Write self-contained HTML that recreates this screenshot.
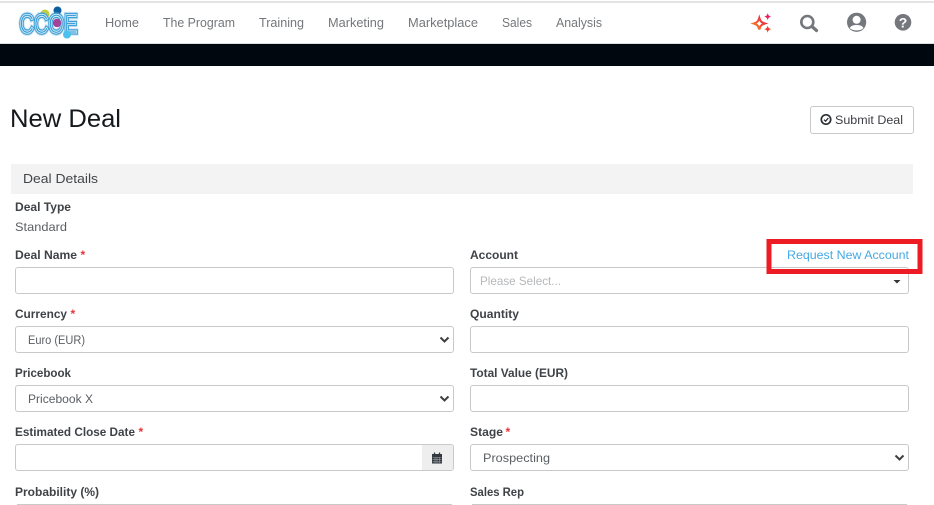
<!DOCTYPE html>
<html lang="en">
<head>
<meta charset="utf-8">
<title>New Deal</title>
<style>
html,body{margin:0;padding:0;width:934px;height:505px;overflow:hidden;background:#fff}
svg{display:block;position:absolute;left:0;top:0}
text{font-family:"Liberation Sans",Arial,sans-serif}
.nav{font-size:12.6px;fill:#74777b}
.lb{font-size:12.3px;font-weight:bold;fill:#3f4247}
.req{font-size:12px;font-weight:bold;fill:#e8333a}
.val{font-size:12.3px;fill:#5a5e63}
.box{fill:#fff;stroke:#c9c9c9;stroke-width:1}
.chev{fill:none;stroke:#3f3f3f;stroke-width:2}
</style>
</head>
<body>
<svg width="934" height="505" viewBox="0 0 934 505" xmlns="http://www.w3.org/2000/svg">
<!-- top bar -->
<rect x="0" y="0" width="934" height="505" fill="#fff"/>
<rect x="0" y="1" width="934" height="2" fill="#e3e3e3"/>
<rect x="0" y="43" width="934" height="1" fill="#dcdfe2"/>
<rect x="0" y="44" width="934" height="22" fill="#00070f"/>

<!-- logo -->
<circle cx="45" cy="14" r="4.500" fill="#c5cf3a"/>
<circle cx="57.500" cy="10.500" r="4" fill="#0d5f9e"/>
<text x="19.500" y="33" font-size="27" fill="none" stroke="#4aa6d8" stroke-opacity=".28" stroke-width="5.500" textLength="58" lengthAdjust="spacingAndGlyphs" aria-hidden="true">CCOE</text>
<text x="19.500" y="33" font-size="27" fill="none" stroke="#3f9fd6" stroke-width="3.300" textLength="58" lengthAdjust="spacingAndGlyphs" aria-hidden="true">CCOE</text>
<text x="19.500" y="33" font-size="27" fill="none" stroke="#e4f3fb" stroke-width=".8" textLength="58" lengthAdjust="spacingAndGlyphs">CCOE</text>
<circle cx="57" cy="23" r="4.200" fill="#a2459a"/>
<circle cx="67" cy="34.500" r="4" fill="#4cc1ee"/>

<!-- nav -->
<text class="nav" x="105" y="27" textLength="34" lengthAdjust="spacingAndGlyphs">Home</text>
<text class="nav" x="163" y="27" textLength="72" lengthAdjust="spacingAndGlyphs">The Program</text>
<text class="nav" x="259" y="27" textLength="45" lengthAdjust="spacingAndGlyphs">Training</text>
<text class="nav" x="328" y="27" textLength="56" lengthAdjust="spacingAndGlyphs">Marketing</text>
<text class="nav" x="408" y="27" textLength="70" lengthAdjust="spacingAndGlyphs">Marketplace</text>
<text class="nav" x="502" y="27" textLength="30" lengthAdjust="spacingAndGlyphs">Sales</text>
<text class="nav" x="556" y="27" textLength="46" lengthAdjust="spacingAndGlyphs">Analysis</text>

<!-- sparkle icon -->
<defs><linearGradient id="sg" x1="0" y1="1" x2="1" y2="0"><stop offset="0" stop-color="#f58a1f"/><stop offset="1" stop-color="#ee1c4a"/></linearGradient></defs>
<path d="M759.300 18 C760.200 21 761 22.300 764.800 23.500 C761 24.700 760.200 26 759.300 29.500 C758.400 26 757.600 24.700 753.800 23.500 C757.600 22.300 758.400 21 759.300 18Z" fill="none" stroke="url(#sg)" stroke-width="2.100"/>
<path d="M767.700 13 C768.300 15.400 768.900 16 771.200 16.600 C768.900 17.200 768.300 17.800 767.700 20.200 C767.100 17.800 766.500 17.200 764.200 16.600 C766.500 16 767.100 15.400 767.700 13Z" fill="#ee1c5a"/>
<path d="M767.700 25.500 C768.300 27.900 768.900 28.500 771.200 29.100 C768.900 29.700 768.300 30.300 767.700 32.700 C767.100 30.300 766.500 29.700 764.200 29.100 C766.500 28.500 767.100 27.900 767.700 25.500Z" fill="#f2382f"/>

<!-- search icon -->
<circle cx="807.300" cy="22" r="6" fill="none" stroke="#74777b" stroke-width="2.600"/>
<path d="M812 26.500 L816.500 30.500" stroke="#74777b" stroke-width="3.200" stroke-linecap="round"/>

<!-- user icon -->
<circle cx="856.600" cy="22.300" r="9.600" fill="#74777b"/>
<circle cx="856.600" cy="19.800" r="4" fill="#fff"/>
<path d="M849.800 28 C851 25.600 853.500 25 856.600 25 C859.700 25 862.200 25.600 863.400 28 C861.800 29.900 859.300 30.400 856.600 30.400 C853.900 30.400 851.400 29.900 849.800 28Z" fill="#fff"/>

<!-- help icon -->
<circle cx="903" cy="22.300" r="8.300" fill="#74777b"/>
<text x="903" y="27.300" font-size="14" font-weight="bold" fill="#fff" text-anchor="middle">?</text>

<!-- heading -->
<text x="10" y="127" font-size="25" fill="#15181c" textLength="111" lengthAdjust="spacingAndGlyphs">New Deal</text>

<!-- submit button -->
<rect class="box" x="810.500" y="106.500" width="103" height="27" rx="2.500"/>
<circle cx="826" cy="119.500" r="4.700" fill="none" stroke="#2a2d31" stroke-width="1.700"/>
<path d="M824 119.700 L825.600 121.200 L828.300 118" fill="none" stroke="#2a2d31" stroke-width="1.300"/>
<text x="835" y="124" font-size="12.300" fill="#3a3d42" textLength="68" lengthAdjust="spacingAndGlyphs">Submit Deal</text>

<!-- section -->
<rect x="11" y="164" width="902" height="30" fill="#f3f3f3"/>
<text x="23" y="183" font-size="13.300" fill="#42454a" textLength="75" lengthAdjust="spacingAndGlyphs">Deal Details</text>

<!-- deal type -->
<text class="lb" x="15" y="211" textLength="56" lengthAdjust="spacingAndGlyphs">Deal Type</text>
<text class="val" x="15" y="231" textLength="52" lengthAdjust="spacingAndGlyphs">Standard</text>

<!-- row 1 -->
<text class="lb" x="15" y="259" textLength="62" lengthAdjust="spacingAndGlyphs">Deal Name</text>
<text class="req" x="80.500" y="259">*</text>
<rect class="box" x="15.500" y="267.500" width="438" height="26" rx="2.500"/>
<text class="lb" x="470" y="259" textLength="48" lengthAdjust="spacingAndGlyphs">Account</text>
<rect class="box" x="470.500" y="267.500" width="438" height="26" rx="2.500"/>
<text x="480" y="285" font-size="11.800" fill="#b5b7ba" textLength="81" lengthAdjust="spacingAndGlyphs">Please Select...</text>
<path d="M893.500 280 L900.500 280 L897 283.500Z" fill="#333"/>
<text x="787" y="259" font-size="12.300" fill="#45a9e2" textLength="122" lengthAdjust="spacingAndGlyphs">Request New Account</text>
<rect x="769" y="241.500" width="151" height="30" fill="none" stroke="#ed1c24" stroke-width="5"/>

<!-- row 2 -->
<text class="lb" x="15" y="318" textLength="52" lengthAdjust="spacingAndGlyphs">Currency</text>
<text class="req" x="70.500" y="318">*</text>
<rect class="box" x="15.500" y="326.500" width="438" height="26" rx="2.500"/>
<text class="val" x="28" y="344" textLength="57" lengthAdjust="spacingAndGlyphs">Euro (EUR)</text>
<path class="chev" d="M440.500 337.500 L444.500 341.500 L448.500 337.500"/>
<text class="lb" x="470" y="318" textLength="49" lengthAdjust="spacingAndGlyphs">Quantity</text>
<rect class="box" x="470.500" y="326.500" width="438" height="26" rx="2.500"/>

<!-- row 3 -->
<text class="lb" x="15" y="377" textLength="56" lengthAdjust="spacingAndGlyphs">Pricebook</text>
<rect class="box" x="15.500" y="385.500" width="438" height="26" rx="2.500"/>
<text class="val" x="28" y="403" textLength="65" lengthAdjust="spacingAndGlyphs">Pricebook X</text>
<path class="chev" d="M440.500 396.500 L444.500 400.500 L448.500 396.500"/>
<text class="lb" x="470" y="377" textLength="98" lengthAdjust="spacingAndGlyphs">Total Value (EUR)</text>
<rect class="box" x="470.500" y="385.500" width="438" height="26" rx="2.500"/>

<!-- row 4 -->
<text class="lb" x="15" y="436" textLength="120" lengthAdjust="spacingAndGlyphs">Estimated Close Date</text>
<text class="req" x="138.500" y="436">*</text>
<rect class="box" x="15.500" y="444.500" width="438" height="26" rx="2.500"/>
<path d="M422 445 H451 a2 2 0 0 1 2 2 V468 a2 2 0 0 1 -2 2 H422Z" fill="#eeeeee"/>
<rect x="432" y="454" width="10" height="9.500" fill="#33383f"/>
<path d="M434.500 452.500 V455 M439.500 452.500 V455" stroke="#33383f" stroke-width="1.300"/>
<path d="M432.500 457.500 H441.500 M432.500 459.700 H441.500 M432.500 461.800 H441.500 M435 457 V463 M437 457 V463 M439.300 457 V463" stroke="#9aa0a6" stroke-width=".6"/>
<text class="lb" x="470" y="436" textLength="33" lengthAdjust="spacingAndGlyphs">Stage</text>
<text class="req" x="505.500" y="436">*</text>
<rect class="box" x="470.500" y="444.500" width="438" height="26" rx="2.500"/>
<text class="val" x="483" y="462" textLength="67" lengthAdjust="spacingAndGlyphs">Prospecting</text>
<path class="chev" d="M895.500 455.500 L899.500 459.500 L903.500 455.500"/>

<!-- row 5: only the top edge of these inputs is inside the frame -->
<text class="lb" x="15" y="496" textLength="84" lengthAdjust="spacingAndGlyphs">Probability (%)</text>
<rect x="17" y="504" width="435" height="1" fill="#c9c9c9"/>
<text class="lb" x="470" y="496" textLength="54" lengthAdjust="spacingAndGlyphs">Sales Rep</text>
<rect x="472" y="504" width="435" height="1" fill="#c9c9c9"/>
</svg>
</body>
</html>
